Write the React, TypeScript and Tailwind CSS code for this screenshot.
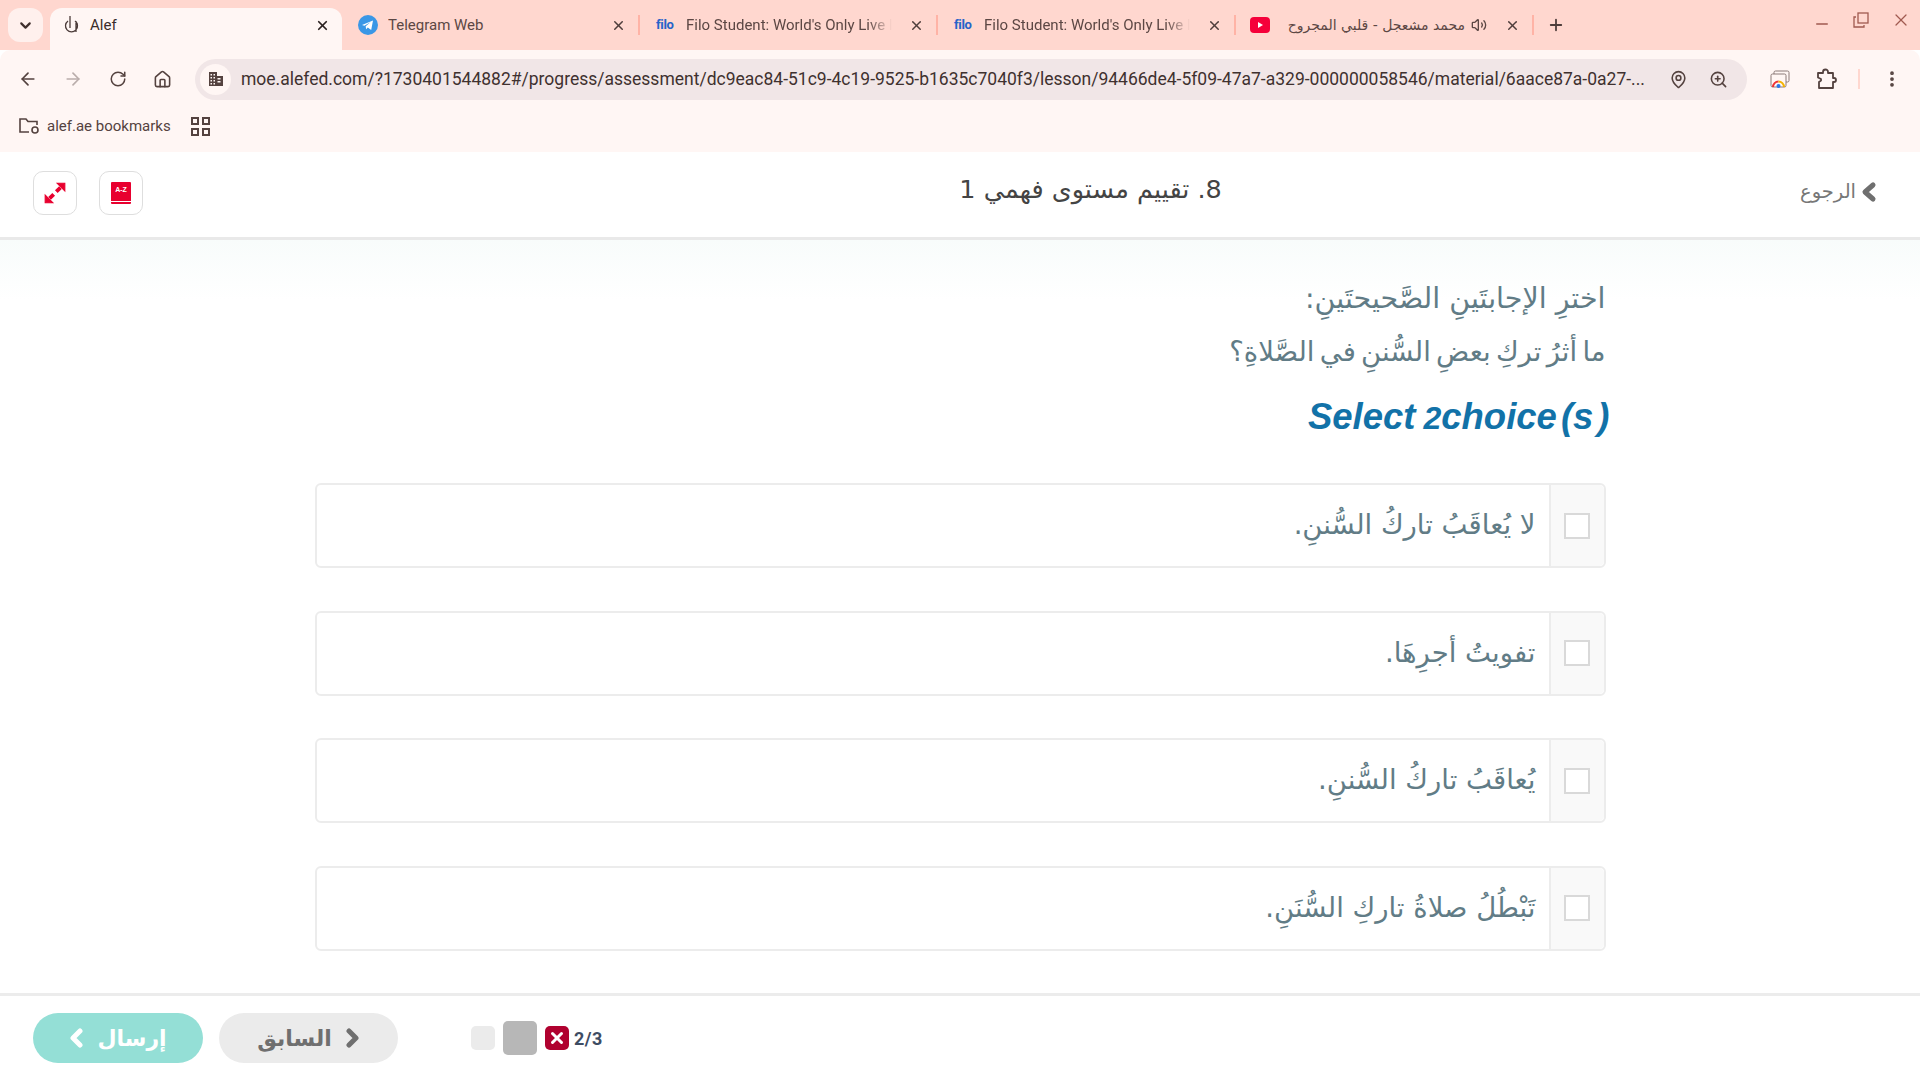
import React from "react";
import {
  ArrowLeft,
  ArrowRight,
  ChevronDown,
  EllipsisVertical,
  House,
  MapPin,
  Minus,
  Plus,
  RotateCw,
  Volume2,
  X,
  ZoomIn,
} from "lucide-react";

const ar = "font-['DejaVu_Sans',sans-serif]";

const options = [
  "لا يُعاقَبُ تاركُ السُّننِ.",
  "تفويتُ أجرِهَا.",
  "يُعاقَبُ تاركُ السُّننِ.",
  "تَبْطُلُ صلاةُ تاركِ السُّنَنِ.",
];

const Telegram = () => (
  <svg width="20" height="20" viewBox="0 0 20 20">
    <circle cx="10" cy="10" r="10" fill="#3a97e6" />
    <path d="M4 10l11-4.500-1.800 9.500-3.400-2.500-1.700 1.700-.4-3 5-4.200-6.300 3.700z" fill="#fff" />
  </svg>
);

const Youtube = () => (
  <svg width="20" height="16" viewBox="0 0 20 16">
    <rect width="20" height="16" rx="4" fill="#f5003a" />
    <path d="M8 5l5 3-5 3z" fill="#fff" />
  </svg>
);

const Filo = () => <span className="w-[18px] text-[13px] font-bold text-[#2563c9] tracking-tight">filo</span>;

const Tab = ({ icon, title, fade }: { icon: React.ReactNode; title: string; fade?: boolean }) => (
  <div className="relative flex h-[42px] w-[298px] items-center pb-[8px] pl-[16px] pr-[14px]">
    <div className="flex w-[28px] shrink-0 items-center">{icon}</div>
    <span
      className={`ml-[2px] w-[206px] overflow-hidden whitespace-nowrap text-[15px] text-[#5c4744] ${
        fade ? "[mask-image:linear-gradient(to_left,transparent,black_24px)]" : ""
      }`}
    >
      {title}
    </span>
    <X size={15} strokeWidth={2.4} className="ml-auto text-[#4e3d3b]" />
    <div className="absolute right-0 top-[7px] h-[20px] w-[2px] bg-[#ffb3a6]" />
  </div>
);

const Tool = ({ children }: { children: React.ReactNode }) => (
  <div className="flex w-[45px] items-center justify-center text-[#54423f]">{children}</div>
);

const Option = ({ text }: { text: string }) => (
  <div dir="rtl" className="flex h-[85px] w-full rounded-[6px] border-2 border-[#ececec] bg-white">
    <div className="flex w-[55px] shrink-0 items-center justify-center rounded-r-[5px] border-l-2 border-[#ececec] bg-[#f9f9f9]">
      <div className="h-[26px] w-[26px] border-2 border-[#d9d9d9] bg-white" />
    </div>
    <p className={`${ar} pr-[13px] pt-[19px] text-[27.500px] leading-[40px] text-[#617c86]`}>{text}</p>
  </div>
);

export default function App() {
  return (
    <div className="flex h-screen w-full flex-col overflow-hidden bg-white font-['Roboto',sans-serif]">
      {/* tab strip */}
      <div className="flex h-[50px] shrink-0 items-end bg-[#ffd7cf] pl-[8px]">
        <div className="mb-[8px] mr-[7px] flex h-[34px] w-[35px] items-center justify-center rounded-[12px] bg-[#fff0ed]">
          <ChevronDown size={17} strokeWidth={3} className="text-[#3f2f2d]" />
        </div>
        <div className="flex h-[42px] w-[292px] items-center rounded-t-[12px] bg-[#fff6f4] pb-[8px] pl-[13px] pr-[12px]">
          <svg width="18" height="22" viewBox="0 0 18 22" fill="none" stroke="#4b3b39" strokeWidth="1.300">
            <path d="M7 2v12M5 7a6 6 0 1 0 7 0M13 7v11" />
          </svg>
          <span className="ml-[9px] text-[15px] text-[#3a2d2b]">Alef</span>
          <X size={15} strokeWidth={2.8} className="ml-auto text-[#2b2120]" />
        </div>
        <Tab icon={<Telegram />} title="Telegram Web" />
        <Tab icon={<Filo />} title="Filo Student: World's Only Live I" fade />
        <Tab icon={<Filo />} title="Filo Student: World's Only Live I" fade />
        <div className="relative flex h-[42px] w-[298px] items-center pb-[8px] pl-[14px] pr-[14px]">
          <Youtube />
          <div
            className={`${ar} ml-[16px] flex w-[179px] items-center justify-start overflow-hidden whitespace-nowrap text-[14px] text-[#5c4744]`}
            dir="rtl"
          >
            محمد مشعجل - قلبي المجروح
          </div>
          <Volume2 size={16} className="ml-[6px] text-[#5c4744]" />
          <X size={15} strokeWidth={2.4} className="ml-auto text-[#4e3d3b]" />
          <div className="absolute right-0 top-[7px] h-[20px] w-[2px] bg-[#ffb3a6]" />
        </div>
        <div className="mb-[16px] ml-[13px]">
          <Plus size={18} strokeWidth={2.4} className="text-[#4e3d3b]" />
        </div>
        <div className="mb-[17px] ml-auto flex items-center gap-[22px] pr-[9px] text-[#a05a50]">
          <Minus size={18} className="mt-[8px]" />
          <svg width="16" height="16" viewBox="0 0 16 16" fill="none" stroke="currentColor" strokeWidth="1.300">
            <rect x="5" y="1" width="10" height="10" />
            <path d="M3 5H1v10h10v-2" />
          </svg>
          <X size={20} strokeWidth={1.5} />
        </div>
      </div>

      {/* toolbar */}
      <div className="h-[102px] shrink-0 rounded-t-[10px] bg-[#fff6f4]">
        <div className="flex h-[58px] items-center pl-[5px] pr-[12px]">
          <Tool><ArrowLeft size={20} /></Tool>
          <Tool><ArrowRight size={20} className="opacity-40" /></Tool>
          <Tool><RotateCw size={18} /></Tool>
          <Tool><House size={19} /></Tool>
          <div className="ml-[10px] flex h-[41px] w-[1552px] items-center rounded-full bg-[#f1e6e7] pl-[5px] pr-[19px]">
            <div className="flex h-[31px] w-[31px] items-center justify-center rounded-full bg-[#fff6f4]">
              <svg width="16" height="16" viewBox="0 0 16 16" fill="#54423f">
                <path d="M1 1h8v4h6v10H1zM2.500 3v1.500H4V3zm3 0v1.500H7V3zm-3 3v1.500H4V6zm3 0v1.500H7V6zm-3 3v1.500H4V9zm3 0v1.500H7V9zm-3 3v1.500H4V12zm3 0v1.500H7V12zM9.500 7v1.500h3V7zm0 3v1.500h3V10z" />
              </svg>
            </div>
            <span className="ml-[10px] whitespace-nowrap text-[17.500px] text-[#3f312f]">
              moe.alefed.com/?1730401544882#/progress/assessment/dc9eac84-51c9-4c19-9525-b1635c7040f3/lesson/94466de4-5f09-47a7-a329-000000058546/material/6aace87a-0a27-...
            </span>
            <MapPin size={19} className="ml-auto shrink-0 text-[#54423f]" />
            <ZoomIn size={19} className="ml-[21px] shrink-0 text-[#54423f]" />
          </div>
          <div className="ml-[23px] flex items-center text-[#54423f]">
            <svg width="20" height="18" viewBox="0 0 20 18" fill="none">
              <rect x="4" y="1" width="15" height="11" rx="1.500" stroke="#8b7a78" />
              <rect x="1" y="4" width="15" height="13" rx="1.500" fill="#fff6f4" stroke="#8b7a78" />
              <path d="M3 17a5.500 5.500 0 0 1 5.500-5.500" stroke="#e33" strokeWidth="2" />
              <path d="M8.500 11.500A5.500 5.500 0 0 1 14 17" stroke="#f4b400" strokeWidth="2" />
              <circle cx="8.500" cy="16" r="2" fill="#2a76e8" />
            </svg>
            <svg width="22" height="22" viewBox="0 0 22 22" fill="none" stroke="currentColor" strokeWidth="1.800" strokeLinejoin="round" className="ml-[25px]">
              <path d="M3 5h5V4a2.500 2.500 0 0 1 5 0v1h5v5h1a2 2 0 0 1 0 4h-1v6H4v-6l2-1.500V11L3 9.500z" />
            </svg>
            <div className="ml-[21px] h-[20px] w-[2px] bg-[#ffd7cf]" />
            <EllipsisVertical size={20} strokeWidth={2.500} className="ml-[22px]" />
          </div>
        </div>
        <div className="flex h-[44px] items-center pb-[8px] pl-[18px] text-[#54423f]">
          <svg width="23" height="20" viewBox="0 0 23 20" fill="none" stroke="currentColor" strokeWidth="1.600">
            <path d="M11 16H2V3h6l2 2.500h9V9" />
            <circle cx="17" cy="14" r="3" />
          </svg>
          <span className="ml-[6px] text-[15px] text-[#54423f]">alef.ae bookmarks</span>
          <div className="ml-[20px] grid grid-cols-2 gap-[3px]">
            <div className="h-[8px] w-[8px] border-2 border-[#54423f]" />
            <div className="h-[8px] w-[8px] border-2 border-[#54423f]" />
            <div className="h-[8px] w-[8px] border-2 border-[#54423f]" />
            <div className="h-[8px] w-[8px] border-2 border-[#54423f]" />
          </div>
        </div>
      </div>

      {/* lesson header */}
      <div className="flex h-[88px] shrink-0 items-start border-b-[3px] border-[#e9e9e9] pl-[33px] pr-[42px] pt-[19px]">
        <div className="flex gap-[22px]">
          <div className="flex h-[44px] w-[44px] items-center justify-center rounded-[10px] border border-[#dedede]">
            <svg width="24" height="24" viewBox="0 0 22 22" fill="#e8002f" stroke="#e8002f">
              <path d="M13 2h7v7zM9 20H2v-7z" />
              <path d="M16 6l-3.800 3.800M6 16l3.800-3.800" strokeWidth="3.500" />
            </svg>
          </div>
          <div className="flex h-[44px] w-[44px] items-center justify-center rounded-[10px] border border-[#dedede]">
            <div className="flex h-[22px] w-[20px] flex-col rounded-[1px] bg-[#e8002f]">
              <span className="mt-[4px] text-center font-['Liberation_Sans',sans-serif] text-[7px] font-bold leading-[8px] text-white">A-Z</span>
              <div className="mb-[2px] mt-auto h-[1px] bg-white" />
            </div>
          </div>
        </div>
        <div dir="rtl" className={`${ar} flex flex-1 justify-center pl-[238px] text-[25.500px] leading-[36px] text-[#444]`}>
          8. تقييم مستوى فهمي 1
        </div>
        <div dir="rtl" className={`${ar} flex items-center gap-[4px] pt-[3px] text-[19.500px] leading-[36px] text-[#777]`}>
          <svg width="18" height="22" viewBox="0 0 18 22" fill="none" stroke="#6f6f6f" strokeWidth="5" strokeLinecap="round" strokeLinejoin="round">
            <path d="M13 4l-8 7 8 7" />
          </svg>
          الرجوع
        </div>
      </div>

      {/* question */}
      <div className="flex-1 bg-gradient-to-b from-[#f8fcfb] to-white to-[8%]">
        <div className="mx-auto w-[1291px] pt-[32px]">
          <div dir="rtl" className={`${ar} leading-[53px] text-[#617c86]`}>
            <p className="text-[28.500px]">اخترِ الإجابتَينِ الصَّحيحتَينِ:</p>
            <p className="text-[27.500px] [word-spacing:-3.500px]">ما أثرُ تركِ بعضِ السُّننِ في الصَّلاةِ؟</p>
          </div>
          <p className="-mr-[4px] mt-[19px] flex h-[40px] items-baseline justify-end whitespace-nowrap font-['Liberation_Sans',sans-serif] text-[36.500px] font-bold italic leading-[40px] text-[#1272a8]">
            <span>Select</span>
            <span className="ml-[8px] text-[32px]">2</span>
            <span>choice</span>
            <span className="ml-[4px]">(s</span>
            <span className="ml-[4px]">)</span>
          </p>
          <div className="mt-[46px] flex flex-col gap-[42.600px]">
            {options.map((o) => (
              <Option key={o} text={o} />
            ))}
          </div>
        </div>
      </div>

      {/* footer */}
      <div className="flex h-[87px] shrink-0 items-center border-t-[3px] border-[#ececec] pl-[33px]">
        <div dir="rtl" className={`${ar} flex h-[50px] w-[170px] items-center justify-center gap-[14px] rounded-full bg-[#94dfd6] text-[22px] font-bold text-white`}>
          إرسال
          <svg width="14" height="20" viewBox="0 0 14 20" fill="none" stroke="#fff" strokeWidth="5" strokeLinecap="round" strokeLinejoin="round">
            <path d="M11 3l-7 7 7 7" />
          </svg>
        </div>
        <div dir="rtl" className={`${ar} ml-[16px] flex h-[50px] w-[179px] items-center justify-center gap-[14px] rounded-full bg-[#ebebeb] text-[22px] font-bold text-[#6f6f6f]`}>
          <svg width="14" height="20" viewBox="0 0 14 20" fill="none" stroke="#6f6f6f" strokeWidth="5" strokeLinecap="round" strokeLinejoin="round" className="order-first">
            <path d="M3 3l7 7-7 7" />
          </svg>
          السابق
        </div>
        <div className="ml-[73px] flex items-center">
          <div className="h-[24px] w-[24px] rounded-[5px] bg-[#ebebeb]" />
          <div className="ml-[8px] h-[34px] w-[34px] rounded-[5px] bg-[#b7b7b7]" />
          <div className="ml-[8px] flex h-[24px] w-[24px] items-center justify-center rounded-[5px] bg-[#b0012f]">
            <X size={18} strokeWidth={4} className="text-white" />
          </div>
          <span className="ml-[5px] font-['Roboto',sans-serif] text-[18px] font-bold tracking-[0.5px] text-[#3e4c63]">2/3</span>
        </div>
      </div>
    </div>
  );
}
